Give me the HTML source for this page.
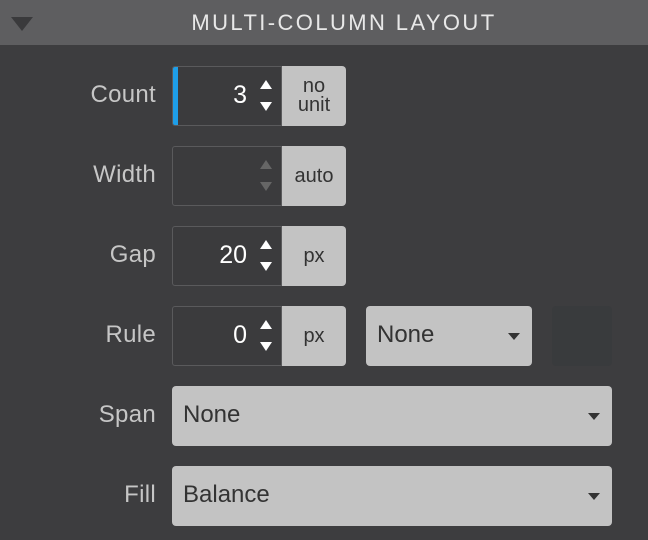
<!DOCTYPE html>
<html><head><style>
body{margin:0;width:648px;height:540px;background:#3d3d3f;font-family:"Liberation Sans",sans-serif;position:relative;overflow:hidden}
.hdr{position:absolute;left:0;top:0;width:648px;height:45px;background:#5e5e60;}
.hdr .t{position:absolute;left:0;width:688px;top:10px;text-align:center;color:#e8e8e8;font-size:22px;letter-spacing:2.4px}
.tri{position:absolute;left:11px;top:17px;width:0;height:0;border-left:11px solid transparent;border-right:11px solid transparent;border-top:14px solid #3a3a3c}
.lbl{position:absolute;right:492px;color:#c6c6c6;font-size:24px;text-align:right;letter-spacing:0.3px}
.inp{position:absolute;left:172px;width:108px;height:58px;border:1px solid #5a5a5c;border-radius:3px 0 0 3px;background:#3b3b3d}
.inp .v{position:absolute;right:34px;top:14px;color:#fff;font-size:25px}
.up,.dn{position:absolute;right:9px;width:0;height:0;border-left:6px solid transparent;border-right:6px solid transparent}
.up{top:13px;border-bottom:9px solid #fff}.dn{top:35px;border-top:9px solid #fff}
.unit{position:absolute;left:282px;width:64px;height:60px;background:#c3c3c3;border-radius:0 4px 4px 0;color:#333;font-size:20px;text-align:center}
.sel{position:absolute;background:#c3c3c3;border-radius:4px;height:60px;color:#333;font-size:24px}
.sel span{position:absolute;left:11px;top:15px}
.sel i{position:absolute;right:12px;top:27px;width:0;height:0;border-left:6px solid transparent;border-right:6px solid transparent;border-top:7px solid #333}
</style></head><body>
<div class="hdr"><div class="tri"></div><div class="t">MULTI-COLUMN LAYOUT</div></div>

<div class="lbl" style="top:81px">Count</div>
<div class="inp" style="top:66px"><div style="position:absolute;left:0;top:0;width:5px;height:58px;background:#1e9ee8;border-radius:2px 0 0 2px"></div><div class="v">3</div><div class="up"></div><div class="dn"></div></div>
<div class="unit" style="top:66px;line-height:19px"><div style="padding-top:11px">no<br>unit</div></div>

<div class="lbl" style="top:161px">Width</div>
<div class="inp" style="top:146px"><div class="up" style="border-bottom-color:#666"></div><div class="dn" style="border-top-color:#666"></div></div>
<div class="unit" style="top:146px;line-height:60px">auto</div>

<div class="lbl" style="top:241px">Gap</div>
<div class="inp" style="top:226px"><div class="v">20</div><div class="up"></div><div class="dn"></div></div>
<div class="unit" style="top:226px;line-height:60px">px</div>

<div class="lbl" style="top:321px">Rule</div>
<div class="inp" style="top:306px"><div class="v">0</div><div class="up"></div><div class="dn"></div></div>
<div class="unit" style="top:306px;line-height:60px">px</div>
<div class="sel" style="top:306px;left:366px;width:166px"><span>None</span><i></i></div>
<div style="position:absolute;top:306px;left:552px;width:60px;height:60px;background:#393b3d;border-radius:4px"></div>

<div class="lbl" style="top:401px">Span</div>
<div class="sel" style="top:386px;left:172px;width:440px"><span>None</span><i></i></div>

<div class="lbl" style="top:481px">Fill</div>
<div class="sel" style="top:466px;left:172px;width:440px"><span>Balance</span><i></i></div>
</body></html>
